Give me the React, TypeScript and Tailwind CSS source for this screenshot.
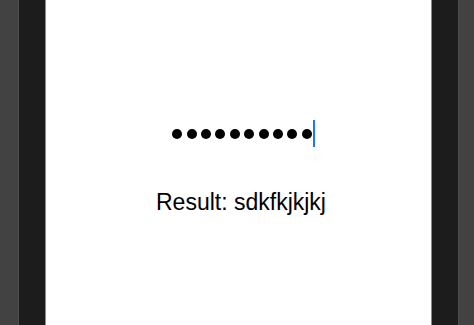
export default function App() {
  const dots = Array.from({ length: 10 });
  return (
    <div className="flex h-[325px] w-[474px] overflow-hidden bg-white">
      <div className="w-[18px] shrink-0 bg-[#424242]" />
      <div className="w-px shrink-0 bg-[#4e4e4e]" />
      <div className="w-[26px] shrink-0 bg-[#1c1c1c]" />
      <div className="w-px shrink-0 bg-[#8a8a8a]" />
      <div className="flex flex-1 flex-col items-center bg-white">
        <div className="mt-[120px] flex h-[27px] items-center pl-[10px]">
          <div className="flex gap-[4.4px]">
            {dots.map((_, i) => (
              <div key={i} className="h-[10px] w-[10px] rounded-full bg-black" />
            ))}
          </div>
          <div className="ml-px h-[27px] w-[2px] bg-[#1a7cf5]" />
        </div>
        <div
          className="mt-[40px] pl-[5px] text-[23px] leading-[30px] text-black"
          style={{ fontFamily: '"Liberation Sans", Arial, sans-serif' }}
        >
          Result: sdkfkjkjkj
        </div>
      </div>
      <div className="w-px shrink-0 bg-[#8a8a8a]" />
      <div className="w-[26px] shrink-0 bg-[#1c1c1c]" />
      <div className="w-px shrink-0 bg-[#4e4e4e]" />
      <div className="w-[15px] shrink-0 bg-[#424242]" />
    </div>
  );
}
